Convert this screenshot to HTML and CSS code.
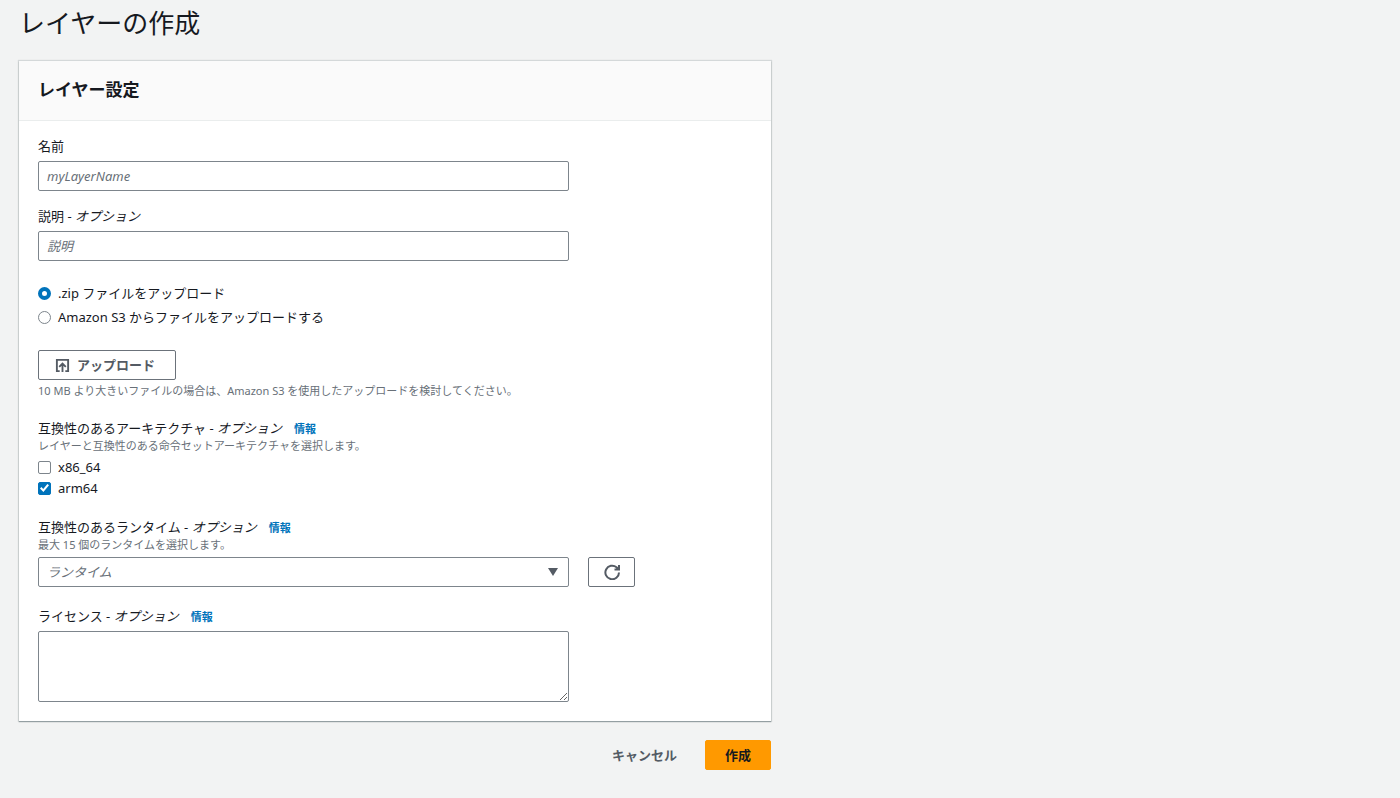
FILE: index.html
```html
<!DOCTYPE html>
<html lang="ja">
<head>
<meta charset="utf-8">
<meta name="viewport" content="width=device-width, initial-scale=1">
<title>レイヤーの作成</title>
<link rel="stylesheet" href="styles.css">
</head>
<body>
<main class="page">
  <h1 class="page-title">レイヤーの作成</h1>
  <form class="layer-form">
    <section class="card">
      <header class="card-header"><h2 class="card-title">レイヤー設定</h2></header>
      <div class="card-body">
        <div class="field">
          <label class="label" for="name">名前</label>
          <input class="control" id="name" type="text" placeholder="myLayerName">
        </div>
        <div class="field">
          <label class="label" for="description">説明 - <i>オプション</i></label>
          <input class="control" id="description" type="text" placeholder="説明">
        </div>
        <div class="choices choices-radio" role="radiogroup" aria-label="アップロード方法">
          <label class="choice"><input class="radio" type="radio" name="source" checked>.zip ファイルをアップロード</label>
          <label class="choice"><input class="radio" type="radio" name="source">Amazon S3 からファイルをアップロードする</label>
        </div>
        <div class="upload">
          <button class="button" type="button">
            <svg class="icon icon-upload" viewBox="0 0 16 16" aria-hidden="true"><path d="M5 14H2V2h12v12h-3M8 15V6.500M4.500 9.500 8 6l3.500 3.500"/></svg>
            アップロード
          </button>
          <p class="hint">10 MB より大きいファイルの場合は、Amazon S3 を使用したアップロードを検討してください。</p>
        </div>
        <div class="architectures" role="group" aria-labelledby="arch-label">
          <div class="label-row"><span class="label" id="arch-label">互換性のあるアーキテクチャ - <i>オプション</i></span><a class="info" href="#">情報</a></div>
          <p class="hint">レイヤーと互換性のある命令セットアーキテクチャを選択します。</p>
          <div class="choices choices-check">
            <label class="choice"><input class="checkbox" type="checkbox">x86_64</label>
            <label class="choice"><input class="checkbox" type="checkbox" checked>arm64</label>
          </div>
        </div>
        <div class="runtimes">
          <div class="label-row"><label class="label" for="runtime">互換性のあるランタイム - <i>オプション</i></label><a class="info" href="#">情報</a></div>
          <p class="hint">最大 15 個のランタイムを選択します。</p>
          <div class="runtime-row">
            <div class="select-wrap">
              <select class="control select" id="runtime"><option>ランタイム</option></select>
              <svg class="caret" viewBox="0 0 10 8" aria-hidden="true"><path d="M0 0h10L5 8z"/></svg>
            </div>
            <button class="button button-icon" type="button" aria-label="更新">
              <svg class="icon" viewBox="0 0 16 16" aria-hidden="true"><path d="M15 8.500a6.800 6.800 0 1 1-2.500-5.300L14.500 5M15 1v4.500h-4.500"/></svg>
            </button>
          </div>
        </div>
        <div class="field">
          <div class="label-row"><label class="label" for="license">ライセンス - <i>オプション</i></label><a class="info" href="#">情報</a></div>
          <textarea class="control textarea" id="license"></textarea>
        </div>
      </div>
    </section>
    <footer class="actions">
      <button class="button button-link" type="button">キャンセル</button>
      <button class="button button-primary" type="submit">作成</button>
    </footer>
  </form>
</main>
</body>
</html>
```
FILE: styles.css
```css
* { box-sizing: border-box; }

body {
  margin: 0;
  background: #f2f3f3;
  color: #16191f;
  font: 13px/18px "Noto Sans", "Noto Sans CJK JP", sans-serif;
}

h1, h2, p { margin: 0; }

input, select, textarea, button { font: inherit; color: inherit; margin: 0; }

.page { padding: 4px 19px 28px; }

.page-title { font-size: 26px; line-height: 38px; font-weight: 400; }

.layer-form { max-width: 752px; margin-top: 19px; }

.card {
  background: #fff;
  box-shadow: 0 1px 1px rgba(0, 28, 36, 0.3), 0 0 1px 1px rgba(0, 28, 36, 0.12);
}

.card-header {
  padding: 17px 19px 18px;
  background: #fafafa;
  border-bottom: 1px solid #eaeded;
}

.card-title { font-size: 17px; line-height: 24px; font-weight: 700; }

.card-body { padding: 16px 19px 19px; }

.field { max-width: 531px; }
.field + .field { margin-top: 16px; }

.label { display: block; }
.label-row { display: flex; align-items: baseline; gap: 12px; }

.info { color: #0073bb; font-size: 11px; line-height: 16px; font-weight: 700; text-decoration: none; }

.hint { color: #687078; font-size: 11px; line-height: 17px; }

.control {
  display: block;
  width: 100%;
  height: 30px;
  padding: 0 8px;
  border: 1px solid #7d858c;
  border-radius: 2px;
  background: #fff;
}

.field .control { margin-top: 6px; }
.control::placeholder { color: #687078; font-style: italic; opacity: 1; }

.textarea { height: 71px; padding: 6px 8px; resize: both; }

.choices { display: flex; flex-direction: column; align-items: flex-start; }
.choices-radio { gap: 6px; margin-top: 23px; }
.choices-check { gap: 3px; margin-top: 4px; }
.choice { display: flex; align-items: center; gap: 7px; }

.radio, .checkbox {
  appearance: none;
  flex: none;
  width: 13px;
  height: 13px;
  border: 1px solid #7d858c;
  background: #fff;
}

.radio { border-radius: 50%; }
.radio:checked { border: 4px solid #0073bb; }
.checkbox { border-radius: 2px; }

.checkbox:checked {
  border-color: #0073bb;
  background: #0073bb;
  display: grid;
  place-items: center;
}

.checkbox:checked::before {
  content: "";
  width: 9px;
  height: 8px;
  background: #fff;
  clip-path: polygon(0 55%, 16% 38%, 36% 62%, 82% 0, 100% 16%, 38% 100%);
}

.upload { margin-top: 24px; }
.upload .hint { margin-top: 2px; }

.button {
  display: inline-flex;
  align-items: center;
  justify-content: center;
  height: 30px;
  padding: 0 20px 0 16px;
  gap: 7px;
  border: 1px solid #6b727a;
  border-radius: 2px;
  background: #fff;
  color: #545b64;
  font-weight: 700;
}

.upload .button { display: flex; }

.icon { width: 16px; height: 16px; fill: none; stroke: currentColor; stroke-width: 2; }
.icon-upload { width: 15px; height: 15px; }

.architectures { margin-top: 20px; }
.runtimes { margin-top: 21px; }

.runtime-row { display: flex; gap: 19px; margin-top: 4px; }
.select-wrap { position: relative; flex: 0 1 531px; }
.select { appearance: none; padding-right: 28px; color: #687078; font-style: italic; }

.caret {
  position: absolute;
  right: 11px;
  top: 11px;
  width: 10px;
  height: 8px;
  fill: #545b64;
  pointer-events: none;
}

.button-icon { width: 47px; padding: 0; }
.runtimes + .field { margin-top: 20px; }

.actions { display: flex; justify-content: flex-end; gap: 9px; margin-top: 19px; }
.button-link { padding: 0 18px; border-color: transparent; background: transparent; }
.button-primary { padding: 0 19px; border-color: #ff9900; background: #ff9900; color: #16191f; }
```
